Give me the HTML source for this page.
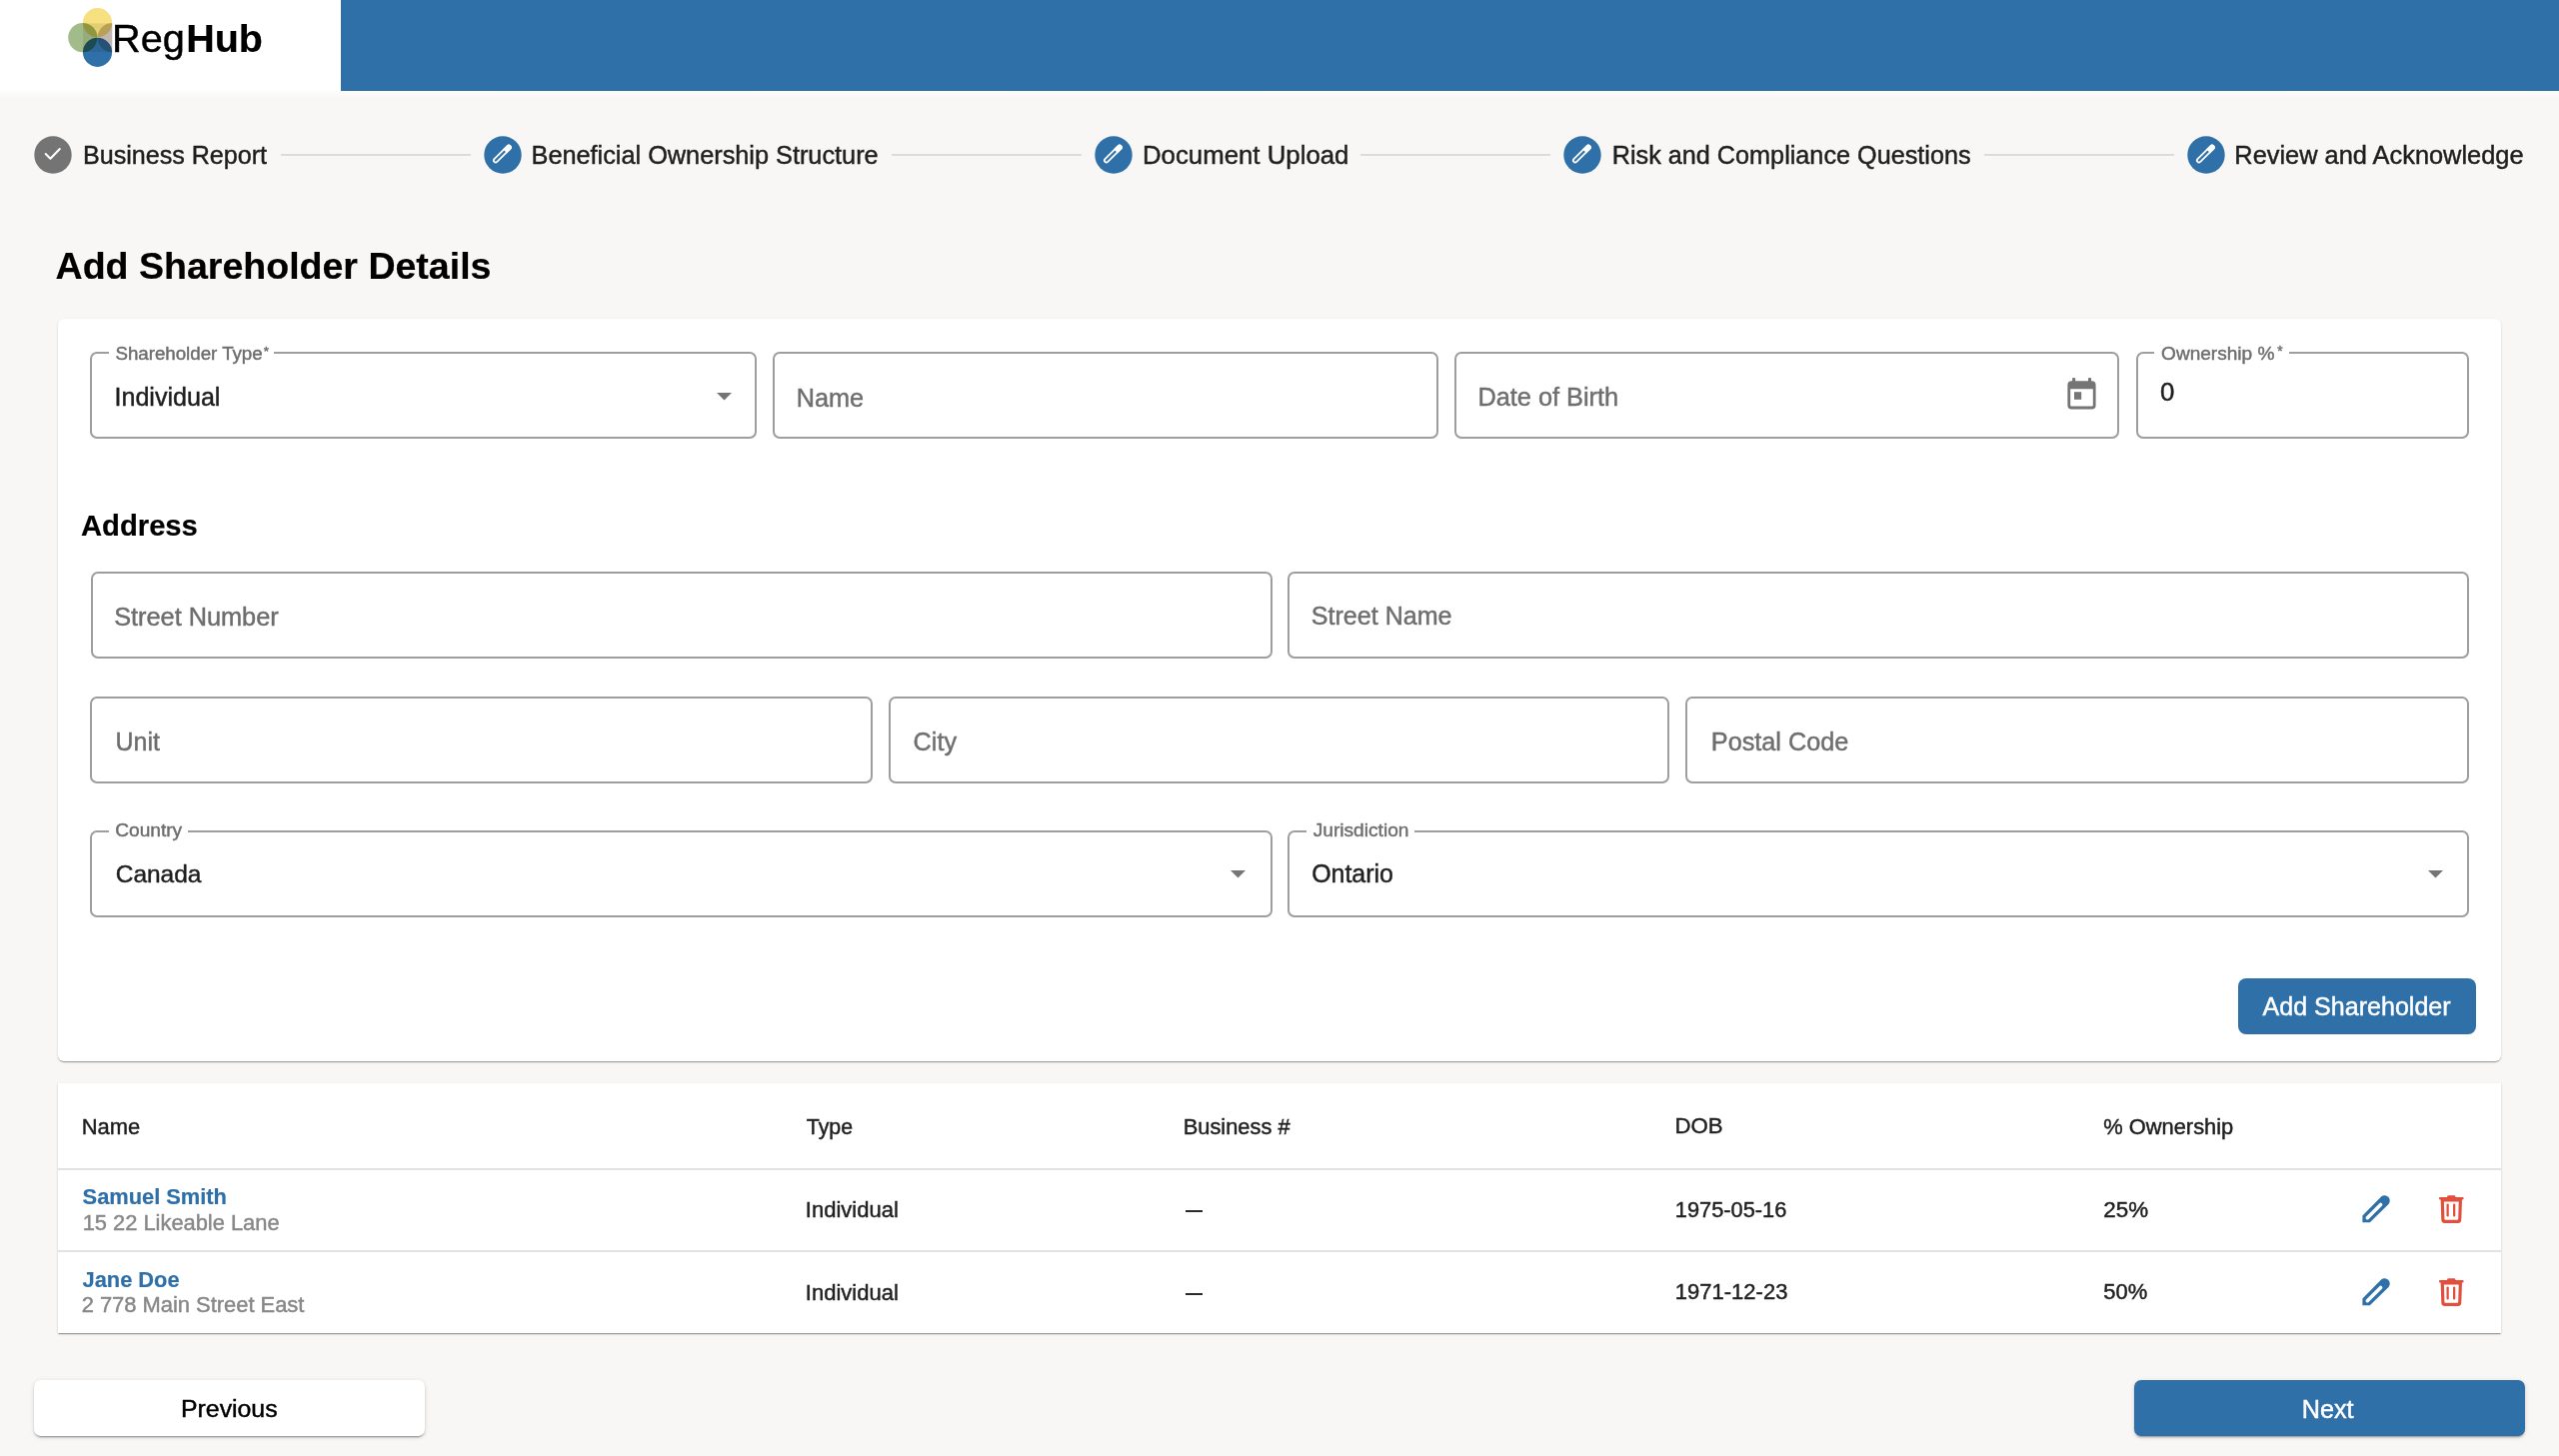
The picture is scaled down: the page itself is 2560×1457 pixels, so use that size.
<!DOCTYPE html>
<html><head><meta charset="utf-8"><title>RegHub - Add Shareholder Details</title>
<style>
*{box-sizing:border-box;margin:0;padding:0}
html,body{width:2560px;height:1457px;overflow:hidden}
body{background:#F8F7F5;font-family:"Liberation Sans",sans-serif;position:relative}
.a{position:absolute}
.t{position:absolute;white-space:nowrap}
.fld{position:absolute;border:2px solid #9E9E9E;border-radius:7px;background:#fff}
.notch{position:absolute;height:6px;background:#fff}
.arrow{position:absolute;width:15px;height:8px}
.conn{position:absolute;height:2px;background:#DCDBD9;top:154px}
</style></head><body>

<div class="a" style="left:0;top:0;width:341px;height:91px;background:#fff"></div>
<div class="a" style="left:341px;top:0;width:2219px;height:91px;background:#2F70A8"></div>
<div class="a" style="left:0;top:91px;width:2560px;height:7px;background:linear-gradient(#FDFDFC,#FBFAF9 70%,#F8F7F5)"></div>
<svg class="a" style="left:66px;top:6px" width="48" height="64" viewBox="66 6 48 64">
<defs><clipPath id="lc"><rect x="66" y="6" width="46.3" height="64"/></clipPath></defs>
<g clip-path="url(#lc)" style="isolation:isolate">
<circle cx="97.5" cy="22.7" r="14.6" fill="#F6E07F" style="mix-blend-mode:multiply"/>
<circle cx="82.8" cy="37.6" r="14.6" fill="#A1BC8A" style="mix-blend-mode:multiply"/>
<circle cx="112.3" cy="37.6" r="14.6" fill="#CFC8C4" style="mix-blend-mode:multiply"/>
<circle cx="97.5" cy="52.3" r="14.6" fill="#2F70A8" style="mix-blend-mode:multiply"/>
<rect x="83" y="23.4" width="29.3" height="28.6" fill="#EDEAE6" style="mix-blend-mode:multiply"/>
</g></svg>
<svg class="a" style="left:34px;top:135.7px" width="38" height="38" viewBox="0 0 38 38">
<circle cx="19" cy="19" r="18.7" fill="#747474"/>
<path d="M11.7 18 L16.4 22.7 L25.8 13.1" fill="none" stroke="#fff" stroke-width="2.1" stroke-linecap="round" stroke-linejoin="round"/>
</svg>
<svg class="a" style="left:483.5px;top:135.7px" width="38" height="38" viewBox="0 0 38 38">
<circle cx="19" cy="19" r="18.7" fill="#2F70A8"/>
<g transform="translate(18.4 18.0) rotate(45)">
<path d="M-1.95 -9.3 a1.95 1.95 0 0 1 3.9 0 V9.3 a1.95 1.95 0 0 1 -3.9 0 Z" fill="none" stroke="#fff" stroke-width="1.8"/>
<path d="M-2.85 -9.3 a2.85 2.85 0 0 1 5.7 0 V-3.9 H-2.85 Z" fill="#fff"/>
</g></svg>
<svg class="a" style="left:1095px;top:135.7px" width="38" height="38" viewBox="0 0 38 38">
<circle cx="19" cy="19" r="18.7" fill="#2F70A8"/>
<g transform="translate(18.4 18.0) rotate(45)">
<path d="M-1.95 -9.3 a1.95 1.95 0 0 1 3.9 0 V9.3 a1.95 1.95 0 0 1 -3.9 0 Z" fill="none" stroke="#fff" stroke-width="1.8"/>
<path d="M-2.85 -9.3 a2.85 2.85 0 0 1 5.7 0 V-3.9 H-2.85 Z" fill="#fff"/>
</g></svg>
<svg class="a" style="left:1564px;top:135.7px" width="38" height="38" viewBox="0 0 38 38">
<circle cx="19" cy="19" r="18.7" fill="#2F70A8"/>
<g transform="translate(18.4 18.0) rotate(45)">
<path d="M-1.95 -9.3 a1.95 1.95 0 0 1 3.9 0 V9.3 a1.95 1.95 0 0 1 -3.9 0 Z" fill="none" stroke="#fff" stroke-width="1.8"/>
<path d="M-2.85 -9.3 a2.85 2.85 0 0 1 5.7 0 V-3.9 H-2.85 Z" fill="#fff"/>
</g></svg>
<svg class="a" style="left:2187.5px;top:135.7px" width="38" height="38" viewBox="0 0 38 38">
<circle cx="19" cy="19" r="18.7" fill="#2F70A8"/>
<g transform="translate(18.4 18.0) rotate(45)">
<path d="M-1.95 -9.3 a1.95 1.95 0 0 1 3.9 0 V9.3 a1.95 1.95 0 0 1 -3.9 0 Z" fill="none" stroke="#fff" stroke-width="1.8"/>
<path d="M-2.85 -9.3 a2.85 2.85 0 0 1 5.7 0 V-3.9 H-2.85 Z" fill="#fff"/>
</g></svg>
<div class="conn" style="left:281px;width:190px"></div>
<div class="conn" style="left:892px;width:190px"></div>
<div class="conn" style="left:1361px;width:190px"></div>
<div class="conn" style="left:1985px;width:190px"></div>
<div class="a" style="left:58px;top:319px;width:2444px;height:743px;background:#fff;border-radius:6px;box-shadow:0 2px 1px -1px rgba(0,0,0,.2),0 1px 1px 0 rgba(0,0,0,.14),0 1px 3px 0 rgba(0,0,0,.12)"></div>
<div class="fld" style="left:90px;top:352px;width:667px;height:87px"></div>
<div class="fld" style="left:773px;top:352px;width:666px;height:87px"></div>
<div class="fld" style="left:1455px;top:352px;width:665px;height:87px"></div>
<div class="fld" style="left:2137px;top:352px;width:333px;height:87px"></div>
<div class="fld" style="left:91px;top:572px;width:1182px;height:87px"></div>
<div class="fld" style="left:1288px;top:572px;width:1182px;height:87px"></div>
<div class="fld" style="left:90px;top:697px;width:783px;height:87px"></div>
<div class="fld" style="left:889px;top:697px;width:781px;height:87px"></div>
<div class="fld" style="left:1686px;top:697px;width:784px;height:87px"></div>
<div class="fld" style="left:90px;top:831px;width:1183px;height:87px"></div>
<div class="fld" style="left:1288px;top:831px;width:1182px;height:87px"></div>
<div class="notch" style="left:109px;width:165px;top:350px"></div>
<div class="notch" style="left:2154.5px;width:135.5px;top:350px"></div>
<div class="notch" style="left:109px;width:78.5px;top:829px"></div>
<div class="notch" style="left:1306.6px;width:108.60000000000014px;top:829px"></div>
<svg class="arrow" style="left:716.5px;top:392.6px" viewBox="0 0 15 8"><path d="M0 0 H15 L7.5 7.5 Z" fill="#757575"/></svg>
<svg class="arrow" style="left:1231.2px;top:870.6px" viewBox="0 0 15 8"><path d="M0 0 H15 L7.5 7.5 Z" fill="#757575"/></svg>
<svg class="arrow" style="left:2429.2px;top:870.6px" viewBox="0 0 15 8"><path d="M0 0 H15 L7.5 7.5 Z" fill="#757575"/></svg>
<svg class="a" style="left:2066px;top:376px" width="34" height="36" viewBox="0 0 34 36">
<g fill="#757575">
<rect x="7.1" y="2" width="3.1" height="5" rx="1"/>
<rect x="23" y="2" width="3.1" height="5" rx="1"/>
<path fill-rule="evenodd" d="M6.4 5.2 H26.6 A4 4 0 0 1 30.6 9.2 V29.4 A4 4 0 0 1 26.6 33.4 H6.4 A4 4 0 0 1 2.4 29.4 V9.2 A4 4 0 0 1 6.4 5.2 Z M5.2 13.2 V29.4 A1 1 0 0 0 6.2 30.4 H26.8 A1 1 0 0 0 27.8 29.4 V13.2 Z"/>
<rect x="9" y="16.2" width="7.2" height="7.6"/>
</g></svg>
<div class="a" style="left:2239px;top:979px;width:238px;height:56px;background:#2F70A8;border-radius:8px"></div>
<div class="a" style="left:58px;top:1084px;width:2444px;height:250px;background:#fff;box-shadow:0 2px 1px -1px rgba(0,0,0,.2),0 1px 1px 0 rgba(0,0,0,.14),0 1px 3px 0 rgba(0,0,0,.12)"></div>
<div class="a" style="left:58px;top:1169px;width:2444px;height:2px;background:#E2E2E2"></div>
<div class="a" style="left:58px;top:1250.5px;width:2444px;height:2px;background:#E2E2E2"></div>
<div class="a" style="left:1186.3px;top:1211px;width:16.6px;height:2px;background:#2A2A2A"></div>
<div class="a" style="left:1186.3px;top:1293.5px;width:16.6px;height:2px;background:#2A2A2A"></div>
<svg class="a" style="left:2355.6px;top:1189.4px" width="45" height="40" viewBox="0 0 45 40">
<path d="M7.4 34.3 L7.4 27.5 L26.1 8.5 A5.25 5.25 0 0 1 33.5 15.9 L14.8 34.3 Z" fill="#2F70A8"/>
<path d="M12.3 29.7 L25.6 16.4" stroke="#fff" stroke-width="3.6" stroke-linecap="round"/>
</svg>
<svg class="a" style="left:2439.6px;top:1196.4px" width="30" height="32" viewBox="0 0 30 32">
<g fill="#E0503C">
<rect x="8.2" y="0.2" width="8.2" height="2.6" rx="1.2"/>
<rect x="0" y="2" width="24.6" height="2.6" rx="1"/>
<path fill-rule="evenodd" d="M1.6 4 H23 L22.3 24.6 A3.4 3.4 0 0 1 18.9 28 H5.7 A3.4 3.4 0 0 1 2.3 24.6 Z M4.9 6.4 L5.4 23.8 A1 1 0 0 0 6.4 24.8 H18.2 A1 1 0 0 0 19.2 23.8 L19.7 6.4 Z"/>
<rect x="7.5" y="8.4" width="2.3" height="13.2" rx="1.1"/>
<rect x="14" y="8.4" width="2.3" height="13.2" rx="1.1"/>
</g></svg>
<svg class="a" style="left:2355.6px;top:1271.9px" width="45" height="40" viewBox="0 0 45 40">
<path d="M7.4 34.3 L7.4 27.5 L26.1 8.5 A5.25 5.25 0 0 1 33.5 15.9 L14.8 34.3 Z" fill="#2F70A8"/>
<path d="M12.3 29.7 L25.6 16.4" stroke="#fff" stroke-width="3.6" stroke-linecap="round"/>
</svg>
<svg class="a" style="left:2439.6px;top:1278.9px" width="30" height="32" viewBox="0 0 30 32">
<g fill="#E0503C">
<rect x="8.2" y="0.2" width="8.2" height="2.6" rx="1.2"/>
<rect x="0" y="2" width="24.6" height="2.6" rx="1"/>
<path fill-rule="evenodd" d="M1.6 4 H23 L22.3 24.6 A3.4 3.4 0 0 1 18.9 28 H5.7 A3.4 3.4 0 0 1 2.3 24.6 Z M4.9 6.4 L5.4 23.8 A1 1 0 0 0 6.4 24.8 H18.2 A1 1 0 0 0 19.2 23.8 L19.7 6.4 Z"/>
<rect x="7.5" y="8.4" width="2.3" height="13.2" rx="1.1"/>
<rect x="14" y="8.4" width="2.3" height="13.2" rx="1.1"/>
</g></svg>
<div class="a" style="left:34px;top:1381px;width:391px;height:56px;background:#fff;border-radius:7px;box-shadow:0 3px 1px -2px rgba(0,0,0,.2),0 2px 2px 0 rgba(0,0,0,.14),0 1px 5px 0 rgba(0,0,0,.12)"></div>
<div class="a" style="left:2135px;top:1381px;width:391px;height:56px;background:#2F70A8;border-radius:7px;box-shadow:0 3px 1px -2px rgba(0,0,0,.2),0 2px 2px 0 rgba(0,0,0,.14),0 1px 5px 0 rgba(0,0,0,.12)"></div>
<div class="t" style="left:112.00px;top:13.13px;font-size:39.65px;line-height:50px;font-weight:400;color:#000;-webkit-text-stroke:0.45px #000">Reg</div>
<div class="t" style="left:186.20px;top:13.13px;font-size:39.46px;line-height:50px;font-weight:700;color:#000;-webkit-text-stroke:0.2px #000">Hub</div>
<div class="t" style="left:82.96px;top:138.56px;font-size:25.09px;line-height:32px;font-weight:400;color:#1F1F1F;-webkit-text-stroke:0.45px #1F1F1F">Business Report</div>
<div class="t" style="left:531.56px;top:138.56px;font-size:25.29px;line-height:32px;font-weight:400;color:#1F1F1F;-webkit-text-stroke:0.45px #1F1F1F">Beneficial Ownership Structure</div>
<div class="t" style="left:1142.96px;top:138.56px;font-size:25.81px;line-height:32px;font-weight:400;color:#1F1F1F;-webkit-text-stroke:0.45px #1F1F1F">Document Upload</div>
<div class="t" style="left:1612.76px;top:138.56px;font-size:25.23px;line-height:32px;font-weight:400;color:#1F1F1F;-webkit-text-stroke:0.45px #1F1F1F">Risk and Compliance Questions</div>
<div class="t" style="left:2235.36px;top:138.56px;font-size:25.38px;line-height:32px;font-weight:400;color:#1F1F1F;-webkit-text-stroke:0.45px #1F1F1F">Review and Acknowledge</div>
<div class="t" style="left:55.60px;top:243.10px;font-size:37.54px;line-height:47px;font-weight:700;color:#000;-webkit-text-stroke:0.2px #000">Add Shareholder Details</div>
<div class="t" style="left:115.48px;top:342.01px;font-size:18.69px;line-height:24px;font-weight:400;color:#6E6E6E;-webkit-text-stroke:0.45px #6E6E6E">Shareholder Type<span style="font-size:.72em;position:relative;top:-3.7px;margin-left:1px">*</span></div>
<div class="t" style="left:114.56px;top:380.56px;font-size:25.06px;line-height:32px;font-weight:400;color:#1F1F1F;-webkit-text-stroke:0.45px #1F1F1F">Individual</div>
<div class="t" style="left:796.80px;top:383.03px;font-size:25.24px;line-height:31px;font-weight:400;color:#6E6E6E;-webkit-text-stroke:0.45px #6E6E6E">Name</div>
<div class="t" style="left:1478.40px;top:382.23px;font-size:25.34px;line-height:31px;font-weight:400;color:#6E6E6E;-webkit-text-stroke:0.45px #6E6E6E">Date of Birth</div>
<div class="t" style="left:2162.08px;top:342.01px;font-size:19.06px;line-height:24px;font-weight:400;color:#6E6E6E;-webkit-text-stroke:0.45px #6E6E6E">Ownership %<span style="font-size:.72em;position:relative;top:-3.8px;margin-left:3px">*</span></div>
<div class="t" style="left:2161.00px;top:377.03px;font-size:25.84px;line-height:31px;font-weight:400;color:#1F1F1F;-webkit-text-stroke:0.45px #1F1F1F">0</div>
<div class="t" style="left:81.04px;top:508.47px;font-size:29.19px;line-height:37px;font-weight:700;color:#000;-webkit-text-stroke:0.2px #000">Address</div>
<div class="t" style="left:114.20px;top:602.23px;font-size:25.31px;line-height:31px;font-weight:400;color:#6E6E6E;-webkit-text-stroke:0.45px #6E6E6E">Street Number</div>
<div class="t" style="left:1311.80px;top:601.43px;font-size:25.08px;line-height:31px;font-weight:400;color:#6E6E6E;-webkit-text-stroke:0.45px #6E6E6E">Street Name</div>
<div class="t" style="left:115.60px;top:727.43px;font-size:24.91px;line-height:31px;font-weight:400;color:#6E6E6E;-webkit-text-stroke:0.45px #6E6E6E">Unit</div>
<div class="t" style="left:913.60px;top:727.43px;font-size:25.24px;line-height:31px;font-weight:400;color:#6E6E6E;-webkit-text-stroke:0.45px #6E6E6E">City</div>
<div class="t" style="left:1711.80px;top:727.43px;font-size:25.26px;line-height:31px;font-weight:400;color:#6E6E6E;-webkit-text-stroke:0.45px #6E6E6E">Postal Code</div>
<div class="t" style="left:115.28px;top:819.41px;font-size:19.12px;line-height:24px;font-weight:400;color:#6E6E6E;-webkit-text-stroke:0.45px #6E6E6E">Country</div>
<div class="t" style="left:115.76px;top:859.16px;font-size:24.46px;line-height:32px;font-weight:400;color:#1F1F1F;-webkit-text-stroke:0.45px #1F1F1F">Canada</div>
<div class="t" style="left:1313.68px;top:819.41px;font-size:19.17px;line-height:24px;font-weight:400;color:#6E6E6E;-webkit-text-stroke:0.45px #6E6E6E">Jurisdiction</div>
<div class="t" style="left:1312.16px;top:858.16px;font-size:24.94px;line-height:32px;font-weight:400;color:#1F1F1F;-webkit-text-stroke:0.45px #1F1F1F">Ontario</div>
<div class="t" style="left:2263.60px;top:992.43px;font-size:25.05px;line-height:31px;font-weight:400;color:#fff;-webkit-text-stroke:0.45px #fff">Add Shareholder</div>
<div class="t" style="left:81.64px;top:1113.77px;font-size:21.93px;line-height:28px;font-weight:400;color:#1F1F1F;-webkit-text-stroke:0.45px #1F1F1F">Name</div>
<div class="t" style="left:806.84px;top:1114.17px;font-size:21.34px;line-height:28px;font-weight:400;color:#1F1F1F;-webkit-text-stroke:0.45px #1F1F1F">Type</div>
<div class="t" style="left:1183.64px;top:1113.77px;font-size:21.88px;line-height:28px;font-weight:400;color:#1F1F1F;-webkit-text-stroke:0.45px #1F1F1F">Business #</div>
<div class="t" style="left:1675.44px;top:1113.37px;font-size:22.22px;line-height:28px;font-weight:400;color:#1F1F1F;-webkit-text-stroke:0.45px #1F1F1F">DOB</div>
<div class="t" style="left:2104.24px;top:1113.77px;font-size:21.87px;line-height:28px;font-weight:400;color:#1F1F1F;-webkit-text-stroke:0.45px #1F1F1F">% Ownership</div>
<div class="t" style="left:82.60px;top:1184.00px;font-size:21.83px;line-height:28px;font-weight:700;color:#2F70A8;-webkit-text-stroke:0.2px #2F70A8">Samuel Smith</div>
<div class="t" style="left:82.68px;top:1210.05px;font-size:21.87px;line-height:27px;font-weight:400;color:#888888;-webkit-text-stroke:0.45px #888888">15 22 Likeable Lane</div>
<div class="t" style="left:805.84px;top:1196.77px;font-size:22.01px;line-height:28px;font-weight:400;color:#1F1F1F;-webkit-text-stroke:0.45px #1F1F1F">Individual</div>
<div class="t" style="left:1675.84px;top:1197.37px;font-size:21.8px;line-height:28px;font-weight:400;color:#1F1F1F;-webkit-text-stroke:0.45px #1F1F1F">1975-05-16</div>
<div class="t" style="left:2104.24px;top:1197.37px;font-size:22.41px;line-height:28px;font-weight:400;color:#1F1F1F;-webkit-text-stroke:0.45px #1F1F1F">25%</div>
<div class="t" style="left:82.60px;top:1266.80px;font-size:21.82px;line-height:28px;font-weight:700;color:#2F70A8;-webkit-text-stroke:0.2px #2F70A8">Jane Doe</div>
<div class="t" style="left:81.68px;top:1292.45px;font-size:21.9px;line-height:27px;font-weight:400;color:#888888;-webkit-text-stroke:0.45px #888888">2 778 Main Street East</div>
<div class="t" style="left:805.84px;top:1279.57px;font-size:22.01px;line-height:28px;font-weight:400;color:#1F1F1F;-webkit-text-stroke:0.45px #1F1F1F">Individual</div>
<div class="t" style="left:1675.84px;top:1279.37px;font-size:22px;line-height:28px;font-weight:400;color:#1F1F1F;-webkit-text-stroke:0.45px #1F1F1F">1971-12-23</div>
<div class="t" style="left:2104.24px;top:1279.37px;font-size:22px;line-height:28px;font-weight:400;color:#1F1F1F;-webkit-text-stroke:0.45px #1F1F1F">50%</div>
<div class="t" style="left:181.00px;top:1394.43px;font-size:24.84px;line-height:31px;font-weight:400;color:#000;-webkit-text-stroke:0.45px #000">Previous</div>
<div class="t" style="left:2302.80px;top:1394.83px;font-size:25.21px;line-height:31px;font-weight:400;color:#fff;-webkit-text-stroke:0.45px #fff">Next</div>
</body></html>
